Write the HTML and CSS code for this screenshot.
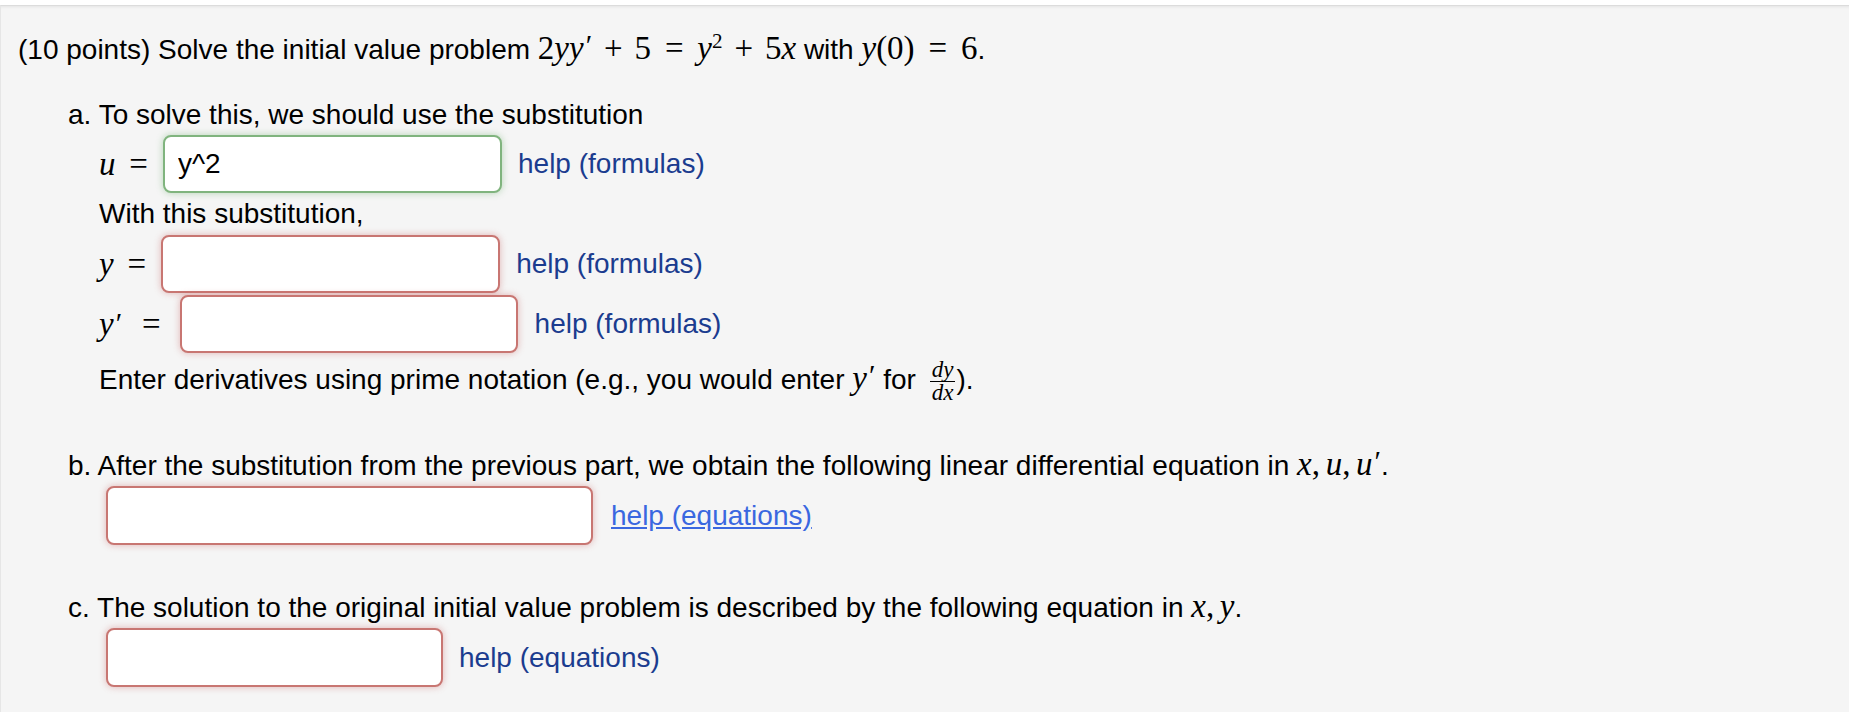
FILE: index.html
```html
<!DOCTYPE html>
<html lang="en">
<head>
    <meta charset="UTF-8">
    <meta name="viewport" content="width=device-width, initial-scale=1.0">
    <title>Problem 4</title>
    <link rel="stylesheet" href="styles.css">
</head>
<body>

<div class="problem">
    <p class="statement">(10 points) Solve the initial value problem <span class="math">2<i>yy</i><span class="prime">′</span><span class="bin">+</span>5<span class="rel">=</span><i>y</i><sup>2</sup><span class="bin">+</span>5<i>x</i></span> with <span class="math"><i>y</i>(0)<span class="rel">=</span>6</span>.</p>

    <!-- part a -->
    <div class="part part-a">
        <p class="part-title">a. To solve this, we should use the substitution</p>
        <div class="sub">
            <div class="answer-row">
                <span class="math label"><i>u</i><span class="rel">=</span></span>
                <input class="ans correct" type="text" value="y^2">
                <a class="help" href="#">help (formulas)</a>
            </div>
            <p class="line">With this substitution,</p>
            <div class="answer-row">
                <span class="math label"><i>y</i><span class="rel">=</span></span>
                <input class="ans incorrect" type="text">
                <a class="help" href="#">help (formulas)</a>
            </div>
            <div class="answer-row row-prime">
                <span class="math label"><i>y</i><span class="prime">′</span><span class="rel rel-wide">=</span></span>
                <input class="ans incorrect" type="text">
                <a class="help" href="#">help (formulas)</a>
            </div>
            <p class="line note">Enter derivatives using prime notation (e.g., you would enter <span class="math"><i>y</i><span class="prime">′</span></span> for <span class="frac"><span class="num">dy</span><span class="den">dx</span></span>).</p>
        </div>
    </div>

    <!-- part b -->
    <div class="part part-b">
        <p class="part-title">b. After the substitution from the previous part, we obtain the following linear differential equation in <span class="math"><i>x</i><span class="comma">,</span><i>u</i><span class="comma">,</span><i>u</i><span class="prime">′</span></span>.</p>
        <div class="answer-row">
            <input class="ans incorrect wide" type="text">
            <a class="help visited" href="#">help (equations)</a>
        </div>
    </div>

    <!-- part c -->
    <div class="part part-c">
        <p class="part-title">c. The solution to the original initial value problem is described by the following equation in <span class="math"><i>x</i><span class="comma">,</span><i>y</i></span>.</p>
        <div class="answer-row">
            <input class="ans incorrect" type="text">
            <a class="help" href="#">help (equations)</a>
        </div>
    </div>
</div>

</body>
</html>
```

FILE: styles.css
```css
/* General styling */
body {
    margin: 0;
    background: #ffffff;
    font-family: "Liberation Sans", Arial, Helvetica, sans-serif;
    font-size: 28px;
    color: #000000;
}

p {
    margin: 0;
}

/* Problem box */
.problem {
    margin-top: 5px;
    min-height: 707px;
    box-sizing: border-box;
    padding: 23px 17px 0;
    background: #f5f5f5;
    border-top: 1px solid #dcdcdc;
    border-left: 1px solid #e6e6e6;
    box-shadow: inset 0 3px 3px -2px rgba(0, 0, 0, 0.07);
}

.statement {
    line-height: 42px;
}

/* Math text */
.math {
    font-family: "Liberation Serif", "Times New Roman", serif;
    font-size: 33px;
    line-height: 1;
    white-space: nowrap;
}

.math i {
    font-style: italic;
}

.math sup {
    font-size: 0.64em;
    line-height: 0;
    vertical-align: 0.52em;
    margin-left: 0;
}

.prime {
    display: inline-block;
    font-size: 0.9em;
    vertical-align: 0.12em;
    margin-left: 2px;
}

.bin {
    margin: 0 0.36em;
}

.rel {
    margin: 0 0.42em;
}

.comma {
    margin-right: 0.17em;
}

/* Parts */
.part {
    margin-left: 50px;
}

.part-a {
    margin-top: 24px;
}

.part-b {
    margin-top: 45px;
}

.part-c {
    margin-top: 43px;
}

.part-title {
    line-height: 40px;
}

.sub {
    padding-left: 31px;
}

.line {
    line-height: 42px;
}

.note {
    margin-top: 6px;
}

/* Answer rows */
.answer-row {
    display: flex;
    align-items: center;
    height: 58px;
}

.part-b .answer-row,
.part-c .answer-row {
    height: 59px;
}

.row-prime {
    margin-top: 2px;
}

.label {
    display: inline-flex;
    align-items: center;
}

.label .rel {
    margin-right: 0;
}

.rel-wide {
    margin-left: 0.6em;
}

.ans {
    width: 339px;
    height: 100%;
    box-sizing: border-box;
    margin: 0 0 0 15px;
    padding: 0 13px;
    background: #ffffff;
    border: 2px solid #cccccc;
    border-radius: 8px;
    font-family: inherit;
    font-size: 28px;
    color: #000000;
    outline: none;
}

.row-prime .ans {
    margin-left: 19px;
    width: 338px;
}

.ans.correct {
    border-color: #80b47e;
    box-shadow: 0 0 7px rgba(100, 170, 100, 0.45);
}

.ans.incorrect {
    border-color: #c87672;
    box-shadow: 0 0 7px rgba(200, 100, 100, 0.45);
}

.part-b .ans,
.part-c .ans {
    margin-left: 38px;
}

.ans.wide {
    width: 487px;
}

.part-c .ans {
    width: 337px;
}

/* Help links */
.help {
    margin-left: 16px;
    color: #1b3c8f;
    text-decoration: none;
}

.row-prime .help {
    margin-left: 17px;
}

.help.visited {
    margin-left: 18px;
    color: #3a67e0;
    text-decoration: underline;
}

/* Small fraction dy/dx */
.frac {
    display: inline-flex;
    flex-direction: column;
    align-items: center;
    vertical-align: middle;
    margin: -10px 1px -10px 6px;
    font-family: "Liberation Serif", "Times New Roman", serif;
    font-style: italic;
    font-size: 23px;
    line-height: 22px;
}

.num {
    border-bottom: 1px solid #000000;
    padding: 0 2px;
}
```
